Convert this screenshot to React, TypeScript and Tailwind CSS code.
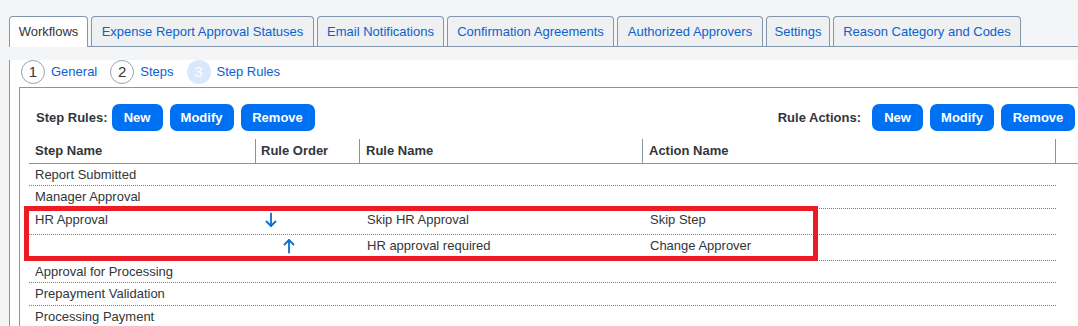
import { ReactNode } from 'react'

const tabs = [
  { label: 'Workflows', width: 'w-[79px]', active: true },
  { label: 'Expense Report Approval Statuses', width: 'w-[223px]' },
  { label: 'Email Notifications', width: 'w-[127px]' },
  { label: 'Confirmation Agreements', width: 'w-[167px]' },
  { label: 'Authorized Approvers', width: 'w-[146px]' },
  { label: 'Settings', width: 'w-[64px]' },
  { label: 'Reason Category and Codes', width: 'w-[188px]' }
]

const steps = [
  { num: '1', label: 'General' },
  { num: '2', label: 'Steps' },
  { num: '3', label: 'Step Rules', current: true }
]

type Row = {
  step: string
  order?: 'up' | 'down'
  rule?: string
  action?: string
  height: string
}

// rule rows sit a little high in their cells
const rows: Row[] = [
  { step: 'Report Submitted', height: 'h-[22px]' },
  { step: 'Manager Approval', height: 'h-[23px]' },
  { step: 'HR Approval', order: 'down', rule: 'Skip HR Approval', action: 'Skip Step', height: 'h-[26px] pb-[4px]' },
  { step: '', order: 'up', rule: 'HR approval required', action: 'Change Approver', height: 'h-[26px] pb-[4px]' },
  { step: 'Approval for Processing', height: 'h-[22px]' },
  { step: 'Prepayment Validation', height: 'h-[23px]' },
  { step: 'Processing Payment', height: 'h-[22px]' }
]

function Arrow({ dir }: { dir: 'up' | 'down' }) {
  return (
    <svg width="12" height="16" viewBox="0 0 12 16" fill="none" stroke="#0a6ed1" strokeWidth={1.8} strokeLinecap="round" strokeLinejoin="round">
      {dir === 'down' ? (
        <>
          <path d="M6 1.5v12.5" />
          <path d="M1.5 9.5L6 14l4.5-4.5" />
        </>
      ) : (
        <>
          <path d="M6 14.5V2" />
          <path d="M1.5 6.5L6 2l4.5 4.5" />
        </>
      )}
    </svg>
  )
}

function Btn({ children, width }: { children: ReactNode; width: string }) {
  return (
    <button className={`${width} h-[27px] rounded-[7px] bg-[#0070f2] text-[13px] font-bold text-white`}>
      {children}
    </button>
  )
}

export default function App() {
  return (
    <div className="relative h-[326px] w-[1078px] overflow-hidden bg-[#f4f5f6] font-['Liberation_Sans',Arial,sans-serif] text-[13px] text-[#32363a]">
      <div className="pl-[9px] pt-[16px]">
        {/* Tabs */}
        <div className="flex items-end gap-[3px] border-b border-[#8396ab]">
          {tabs.map(tab =>
            tab.active ? (
              <div
                key={tab.label}
                className={`${tab.width} -mb-px flex h-[31px] items-center justify-center rounded-t-[4px] border border-b-0 border-[#8396ab] bg-white pb-[1px] text-[#32363a]`}
              >
                {tab.label}
              </div>
            ) : (
              <div
                key={tab.label}
                className={`${tab.width} flex h-[30px] items-center justify-center rounded-t-[4px] border border-b-0 border-[#8396ab] bg-[#eef0f2] text-[#0a62d0]`}
              >
                {tab.label}
              </div>
            )
          )}
        </div>

        {/* Panel */}
        <div className="h-[300px] border-l border-[#8396ab] bg-white">
          <div className="ml-[11px] mt-[13px] flex h-[24px] items-center">
            {steps.map(s => (
              <div key={s.num} className="mr-[13px] flex items-center">
                {s.current ? (
                  <div className="flex h-[24px] w-[24px] items-center justify-center rounded-full bg-[#d9e9fc] text-[15px] text-white">
                    {s.num}
                  </div>
                ) : (
                  <div className="flex h-[24px] w-[24px] items-center justify-center rounded-full border border-[#9aa3ad] text-[15px] text-[#32363a]">
                    {s.num}
                  </div>
                )}
                <span className="ml-[6px] text-[#0a62d0]">{s.label}</span>
              </div>
            ))}
          </div>

          <div className="ml-[9px] mt-[3px] border-l border-t border-[#8396ab] pt-[16px]">
            {/* Toolbar */}
            <div className="flex items-center justify-between pl-[16px] pr-[3px]">
              <div className="flex items-center gap-[7px]">
                <span className="mr-[-3px] font-bold">Step Rules:</span>
                <Btn width="w-[51px]">New</Btn>
                <Btn width="w-[64px]">Modify</Btn>
                <Btn width="w-[74px]">Remove</Btn>
              </div>
              <div className="flex items-center gap-[7px]">
                <span className="mr-[4px] font-bold">Rule Actions:</span>
                <Btn width="w-[51px]">New</Btn>
                <Btn width="w-[64px]">Modify</Btn>
                <Btn width="w-[74px]">Remove</Btn>
              </div>
            </div>

            {/* Table */}
            <div className="ml-[9px] mt-[8px]">
              <div className="flex h-[25px] border-b border-[#8396ab] font-bold">
                <div className="flex w-[227px] items-center border-r border-[#8396ab] pl-[6px]">Step Name</div>
                <div className="flex w-[104px] items-center border-r border-[#8396ab] pl-[5px]">Rule Order</div>
                <div className="flex w-[283px] items-center border-r border-[#8396ab] pl-[6px]">Rule Name</div>
                <div className="flex w-[413px] items-center border-r border-[#8396ab] pl-[6px]">Action Name</div>
              </div>
              {rows.map((r, i) => (
                <div key={i} className={`${r.height} flex w-[1027px] border-b border-dotted border-[#6d8298]`}>
                  <div className="flex w-[227px] items-center pl-[6px]">{r.step}</div>
                  <div className="flex w-[104px] items-center">
                    {r.order === 'down' && (
                      <span className="pl-[9px]">
                        <Arrow dir="down" />
                      </span>
                    )}
                    {r.order === 'up' && (
                      <span className="pl-[27px]">
                        <Arrow dir="up" />
                      </span>
                    )}
                  </div>
                  <div className="flex w-[283px] items-center pl-[7px]">{r.rule}</div>
                  <div className="flex w-[413px] items-center pl-[7px]">{r.action}</div>
                </div>
              ))}
            </div>
          </div>
        </div>
      </div>

      {/* Highlight annotation */}
      <div className="absolute left-[24px] top-[206px] h-[55px] w-[794px] border-[5px] border-[#ed1c24]" />
    </div>
  )
}
